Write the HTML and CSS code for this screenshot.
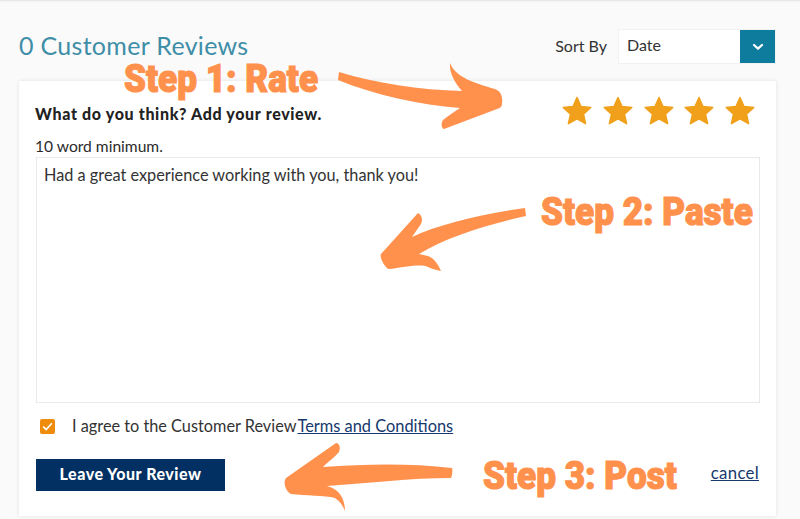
FILE: index.html
```html
<!DOCTYPE html>
<html lang="en">
<head>
<meta charset="utf-8">
<title>Customer Reviews</title>
<link rel="stylesheet" href="styles.css">
</head>
<body>
<main class="page">
  <header class="top">
    <h1 class="title">0 Customer Reviews</h1>
    <div class="sort">
      <span class="sort-label">Sort By</span>
      <div class="select">
        <span class="select-value">Date</span>
        <span class="select-btn">
          <svg width="12" height="8" viewBox="0 0 12 8"><path d="M2 2l4 3.6L10 2" fill="none" stroke="#fff" stroke-width="2.2" stroke-linecap="round" stroke-linejoin="round"/></svg>
        </span>
      </div>
    </div>
  </header>
  <section class="card">
    <div class="card-head">
      <h2 class="prompt">What do you think? Add your review.</h2>
      <div class="stars">
        <svg class="star" viewBox="0 0 30 30"><path class="star-path" d="M15 1.5l4 9 9.8 1-7.3 6.6 2.1 9.6L15 22.8l-8.6 4.9 2.1-9.6L1.2 11.5l9.8-1z"/></svg>
        <svg class="star" viewBox="0 0 30 30"><path class="star-path" d="M15 1.5l4 9 9.8 1-7.3 6.6 2.1 9.6L15 22.8l-8.6 4.9 2.1-9.6L1.2 11.5l9.8-1z"/></svg>
        <svg class="star" viewBox="0 0 30 30"><path class="star-path" d="M15 1.5l4 9 9.8 1-7.3 6.6 2.1 9.6L15 22.8l-8.6 4.9 2.1-9.6L1.2 11.5l9.8-1z"/></svg>
        <svg class="star" viewBox="0 0 30 30"><path class="star-path" d="M15 1.5l4 9 9.8 1-7.3 6.6 2.1 9.6L15 22.8l-8.6 4.9 2.1-9.6L1.2 11.5l9.8-1z"/></svg>
        <svg class="star" viewBox="0 0 30 30"><path class="star-path" d="M15 1.5l4 9 9.8 1-7.3 6.6 2.1 9.6L15 22.8l-8.6 4.9 2.1-9.6L1.2 11.5l9.8-1z"/></svg>
      </div>
    </div>
    <p class="hint">10 word minimum.</p>
    <div class="review-box">Had a great experience working with you, thank you!</div>
    <div class="agree">
      <span class="check">
        <svg width="11" height="9" viewBox="0 0 11 9"><path d="M1.2 4.6l3 2.9 5.6-6.3" fill="none" stroke="#fff" stroke-width="1.6"/></svg>
      </span>
      <span class="agree-text">I agree to the Customer Review</span><a class="link" href="#">Terms and Conditions</a>
    </div>
    <div class="actions">
      <button class="submit" type="button">Leave Your Review</button>
      <a class="link cancel" href="#">cancel</a>
    </div>
  </section>
</main>

<svg class="arrows" width="800" height="519" viewBox="0 0 800 519">
  <path class="arrow" d="M339 72C375 83 420 90 462 91C456 84 449 74 450 63C456 78 475 83 495 89C501 91 503 97 502 104C502 107 500 108 497 109L444 129C441 128 441 123 443 120C448 116 454 112 460 108C420 105 375 95 338 80Z"/>
  <path class="arrow" d="M525 208C480 214 440 224 412 237L421 224C423 220 422 215 418 213L381 254C379 257 385 268 389 269C400 268 420 263 428 267C434 270 438 270 441 271C438 264 434 258 428 256L419 254C445 238 485 225 526 216Z"/>
  <path class="arrow" d="M452 468C410 463 365 464 323 467C328 462 336 456 339 452C341 447 339 443 336 443L286 478C283 482 285 491 291 494C305 496 325 495 335 498C340 501 343 506 345 511C345 500 340 489 327 486C370 483 410 478 451 478C452 476 453 471 452 468Z"/>
</svg>
<div class="step step-one">Step 1: Rate</div>
<div class="step step-two">Step 2: Paste</div>
<div class="step step-three">Step 3: Post</div>
</body>
</html>
```
FILE: styles.css
```css
* { box-sizing: border-box; }
html, body { margin: 0; height: 519px; overflow: hidden; }
body {
  background: #fafafa;
  color: #2b2b2b;
  font-family: "Lato", "Liberation Sans", sans-serif;
  position: relative;
  box-shadow: inset 0 2px 2px -1px #e2e2e2;
}
.page { padding: 27px 24px 0 19px; }
.top { display: flex; justify-content: space-between; align-items: center; height: 37px; margin-bottom: 17px; }
.title { margin: 0; font-size: 25px; line-height: 37px; font-weight: 400; color: #3f8ea8; letter-spacing: 0.3px; }
.sort { display: flex; align-items: center; gap: 11px; padding-top: 2px; }
.sort-label { font-size: 16px; line-height: 31px; color: #333; padding-bottom: 2px; }
.select { display: flex; width: 158px; height: 35px; background: #fff; border: 1px solid #f2f2f2; }
.select-value { flex: 1; padding-left: 8px; line-height: 30px; font-size: 16px; color: #333; }
.select-btn { width: 35px; display: flex; align-items: center; justify-content: center; background: #0e7c9c; }
.card {
  background: #fff;
  height: 435px;
  padding: 0 16px 0 17px;
  box-shadow: 0 0 4px rgba(0, 0, 0, 0.1);
}
.card-head { display: flex; justify-content: space-between; align-items: center; height: 57px; padding-top: 8px; padding-right: 5px; }
.prompt { margin: 0 0 0 -1px; font-size: 16px; font-weight: 900; color: #222; letter-spacing: 0.65px; }
.stars { display: flex; gap: 10.7px; margin-bottom: 6px; }
.star { width: 30px; height: 30px; display: block; }
.star-path { fill: #f0a01a; stroke: #f0a01a; stroke-width: 1.5; stroke-linejoin: round; }
.hint { margin: 0 0 0 -1px; height: 19px; font-size: 15.6px; line-height: 17px; color: #2b2b2b; }
.review-box {
  height: 246px;
  border: 1px solid #e9e9e9;
  padding: 7px;
  font-size: 16.3px;
  line-height: 19px;
  color: #333;
}
.agree { display: flex; align-items: center; height: 23px; margin-top: 11px; font-size: 16.3px; }
.check {
  width: 15px;
  height: 15px;
  margin: 1px 17px 0 4px;
  background: #ef8c0c;
  border-radius: 2px;
  display: flex;
  align-items: center;
  justify-content: center;
}
.agree-text { color: #333; margin-right: 1px; }
.link { color: #15396b; font-size: 16.4px; text-decoration: underline; }
.cancel { font-size: 16.8px; padding-bottom: 5px; margin-right: 1px; letter-spacing: 0.3px; }
.actions { display: flex; justify-content: space-between; align-items: center; margin-top: 22px; }
.submit {
  width: 189px;
  height: 32px;
  padding: 0 0 4px;
  border: 0;
  background: #033063;
  color: #fff;
  font-family: inherit;
  font-size: 16px;
  font-weight: 900;
  letter-spacing: 0.5px;
}
.arrows { position: absolute; left: 0; top: 0; pointer-events: none; }
.arrow { fill: #ff914d; }
.step {
  position: absolute;
  font-family: "Roboto", "Liberation Sans", sans-serif;
  font-weight: 900;
  font-size: 39px;
  line-height: 46px;
  color: #ff914d;
  -webkit-text-stroke: 1.2px #ff914d;
  white-space: nowrap;
  transform: scaleX(0.9);
  transform-origin: left center;
}
.step-one { left: 124px; top: 56px; }
.step-two { left: 541px; top: 189px; }
.step-three { left: 483px; top: 453px; }
```
